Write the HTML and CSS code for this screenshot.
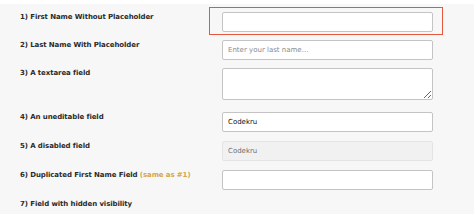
FILE: index.html
```html
<!DOCTYPE html>
<html>
<head>
<meta charset="utf-8">
<link rel="stylesheet" href="styles.css">
</head>
<body>
<div class="page">
  <form class="form">
    <div class="row row-top">
      <label class="label">1) First Name Without Placeholder</label>
      <input class="field" type="text">
      <span class="highlight"></span>
    </div>
    <div class="row row-top">
      <label class="label">2) Last Name With Placeholder</label>
      <input class="field" type="text" placeholder="Enter your last name...">
    </div>
    <div class="row row-tall">
      <label class="label">3) A textarea field</label>
      <textarea class="field area"></textarea>
    </div>
    <div class="row">
      <label class="label">4) An uneditable field</label>
      <input class="field" type="text" value="Codekru" readonly>
    </div>
    <div class="row">
      <label class="label">5) A disabled field</label>
      <input class="field" type="text" value="Codekru" disabled>
    </div>
    <div class="row">
      <label class="label">6) Duplicated First Name Field <span class="note">(same as #1)</span></label>
      <input class="field" type="text">
    </div>
    <div class="row">
      <label class="label">7) Field with hidden visibility</label>
    </div>
  </form>
</div>
</body>
</html>
```

FILE: styles.css
```css
html, body {
  margin: 0;
  padding: 0;
  background: #ffffff;
}
.page {
  margin-top: 4px;
  height: 210px;
  background: #f7f7f7;
  overflow: hidden;
}
.form {
  padding: 8px 0 0 20px;
  display: flex;
  flex-direction: column;
}
.row {
  position: relative;
  display: flex;
  align-items: flex-start;
  margin-bottom: 9px;
}
.row-top {
  margin-bottom: 8px;
}
.row-tall {
  margin-bottom: 12px;
}
.label {
  width: 202px;
  flex: none;
  font-family: "DejaVu Sans", sans-serif;
  font-weight: bold;
  font-size: 7px;
  line-height: 11px;
  color: #2b2b2b;
  letter-spacing: -0.1px;
}
.note {
  color: #d6a54a;
}
.field {
  box-sizing: border-box;
  width: 211px;
  height: 20px;
  margin: 0;
  padding: 0 5px;
  border: 1px solid #c4c4c4;
  border-radius: 2px;
  background: #ffffff;
  font-family: "DejaVu Sans", sans-serif;
  font-size: 7px;
  color: #111;
  outline: none;
}
.field::placeholder {
  color: #8a8a8a;
}
.area {
  height: 32px;
  display: block;
}
.field:disabled {
  background: #f1f1f1;
  border-color: #e4e4e4;
  color: #6f6f6f;
}
.highlight {
  position: absolute;
  left: 189px;
  top: -5px;
  width: 234px;
  height: 28px;
  box-sizing: border-box;
  border: 1.5px solid #e4573f;
  pointer-events: none;
}
```
